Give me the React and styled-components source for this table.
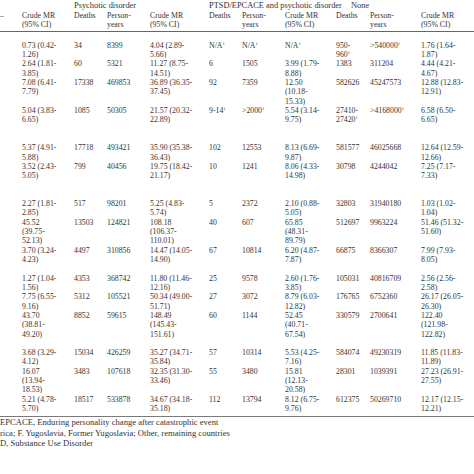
import React from 'react'
import styled, { createGlobalStyle } from 'styled-components'

const Global = createGlobalStyle`
  html, body {
    margin: 0;
    padding: 0;
    background: #fff;
    overflow: hidden;
  }
`

const Page = styled.div`
  width: 474px;
  height: 474px;
  overflow: hidden;
  padding-top: 1.4px;
  box-sizing: border-box;
  font-family: "Liberation Serif", "Times New Roman", serif;
  font-size: 7.8px;
  line-height: 9.32px;
  color: #333;
`

const Row = styled.div`
  display: grid;
  grid-template-columns: 22px 52px 33px 43px 59px 33px 43px 51px 34px 51px 60px;
  margin-top: ${p => (p.$skip || 0) * 9.32}px;
  white-space: nowrap;
`

const Cell = styled.div`
  grid-column: ${p => p.$col || 'auto'};
  padding-left: ${p => p.$indent || 0}px;
`

const GroupLabel = styled(Cell)`
  font-size: 8.4px;
`

const Rule = styled.div`
  height: ${p => p.$thick ? 1.7 : 1}px;
  background: ${p => p.$thick ? '#7a7a7a' : '#666'};
  margin-top: ${p => p.$above || 0}px;
  margin-bottom: ${p => p.$below || 0}px;
`

const Mark = styled.sup`
  font-size: 5px;
  line-height: 0;
  vertical-align: 3px;
  margin-left: 0.5px;
`

const Notes = styled.div`
  font-size: 8.6px;
  line-height: 10.5px;
  white-space: nowrap;
`

const rows = [
  { c: [['0.73 (0.42-', '1.26)'], '34', '8399', ['4.04 (2.89-', '5.66)'], 'N/A*', 'N/A*', 'N/A*', ['950-', '960*'], '>540000*', ['1.76 (1.64-', '1.87)']] },
  { c: [['2.64 (1.81-', '3.85)'], '60', '5321', ['11.27 (8.75-', '14.51)'], '6', '1505', ['3.99 (1.79-', '8.88)'], '1383', '311204', ['4.44 (4.21-', '4.67)']] },
  { c: [['7.08 (6.41-', '7.79)'], '17338', '469853', ['36.89 (36.35-', '37.45)'], '92', '7359', ['12.50', '(10.18-', '15.33)'], '582626', '45247573', ['12.88 (12.83-', '12.91)']] },
  { c: [['5.04 (3.83-', '6.65)'], '1085', '50305', ['21.57 (20.32-', '22.89)'], '9-14*', '>2000*', ['5.54 (3.14-', '9.75)'], ['27410-', '27420*'], '>4168000*', ['6.58 (6.50-', '6.65)']] },
  { skip: 2, c: [['5.37 (4.91-', '5.88)'], '17718', '493421', ['35.90 (35.38-', '36.43)'], '102', '12553', ['8.13 (6.69-', '9.87)'], '581577', '46025668', ['12.64 (12.59-', '12.66)']] },
  { c: [['3.52 (2.43-', '5.05)'], '799', '40456', ['19.75 (18.42-', '21.17)'], '10', '1241', ['8.06 (4.33-', '14.98)'], '30798', '4244042', ['7.25 (7.17-', '7.33)']] },
  { skip: 2, c: [['2.27 (1.81-', '2.85)'], '517', '98201', ['5.25 (4.83-', '5.74)'], '5', '2372', ['2.10 (0.88-', '5.05)'], '32803', '31940180', ['1.03 (1.02-', '1.04)']] },
  { c: [['45.52', '(39.75-', '52.13)'], '13503', '124821', ['108.18', '(106.37-', '110.01)'], '40', '607', ['65.85', '(48.31-', '89.79)'], '512697', '9963224', ['51.46 (51.32-', '51.60)']] },
  { c: [['3.70 (3.24-', '4.23)'], '4497', '310856', ['14.47 (14.05-', '14.90)'], '67', '10814', ['6.20 (4.87-', '7.87)'], '66875', '8366307', ['7.99 (7.93-', '8.05)']] },
  { skip: 1, c: [['1.27 (1.04-', '1.56)'], '4353', '368742', ['11.80 (11.46-', '12.16)'], '25', '9578', ['2.60 (1.76-', '3.85)'], '105031', '40816709', ['2.56 (2.56-', '2.58)']] },
  { c: [['7.75 (6.55-', '9.16)'], '5312', '105521', ['50.34 (49.00-', '51.71)'], '27', '3072', ['8.79 (6.03-', '12.82)'], '176765', '6752360', ['26.17 (26.05-', '26.30)']] },
  { c: [['43.70', '(38.81-', '49.20)'], '8852', '59615', ['148.49', '(145.43-', '151.61)'], '60', '1144', ['52.45', '(40.71-', '67.54)'], '330579', '2700641', ['122.40', '(121.98-', '122.82)']] },
  { skip: 1, c: [['3.68 (3.29-', '4.12)'], '15034', '426259', ['35.27 (34.71-', '35.84)'], '57', '10314', ['5.53 (4.25-', '7.16)'], '584074', '49230319', ['11.85 (11.83-', '11.89)']] },
  { c: [['16.07', '(13.94-', '18.53)'], '3483', '107618', ['32.35 (31.30-', '33.46)'], '55', '3480', ['15.81', '(12.13-', '20.58)'], '28301', '1039391', ['27.23 (26.91-', '27.55)']] },
  { c: [['5.21 (4.78-', '5.70)'], '18517', '533878', ['34.67 (34.18-', '35.18)'], '112', '13794', ['8.12 (6.75-', '9.76)'], '612375', '50269710', ['12.17 (12.15-', '12.21)']] },
]

// a trailing * stands for the small footnote tick
const Line = ({ text }) => {
  if (text.endsWith('*')) {
    return <>{text.slice(0, -1)}<Mark>i</Mark></>
  }
  return <>{text}</>
}

const Content = ({ value }) => {
  const lines = Array.isArray(value) ? value : [value]
  return lines.map((l, i) => (
    <React.Fragment key={i}>
      {i > 0 && <br />}
      <Line text={l} />
    </React.Fragment>
  ))
}

const groupHead = ['Deaths', 'Person-|years', 'Crude MR|(95% CI)']

export default function App() {
  return (
    <Page>
      <Global />
      <Row>
        <GroupLabel $col="3 / span 3">Psychotic disorder</GroupLabel>
        <GroupLabel $col="6 / span 3">PTSD/EPCACE and psychotic disorder</GroupLabel>
        <GroupLabel $col="9 / span 2" $indent={15}>None</GroupLabel>
      </Row>
      <Row>
        <Cell>–</Cell>
        <Cell><Content value={['Crude MR', '(95% CI)']} /></Cell>
        {[0, 1, 2].map(g =>
          groupHead.map((h, i) => (
            <Cell key={g + '-' + i}><Content value={h.split('|')} /></Cell>
          ))
        )}
      </Row>
      <Rule $above={1.2} $below={2.5} />
      {rows.map((r, i) => (
        <Row key={i} $skip={i === 0 ? 1 : r.skip}>
          <Cell />
          {r.c.map((v, j) => (
            <Cell key={j}><Content value={v} /></Cell>
          ))}
        </Row>
      ))}
      <Rule $thick $above={2.2} />
      <Notes>
        EPCACE, Enduring personality change after catastrophic event<br />
        rica; F. Yugoslavia, Former Yugoslavia; Other, remaining countries<br />
        D, Substance Use Disorder
      </Notes>
    </Page>
  )
}
